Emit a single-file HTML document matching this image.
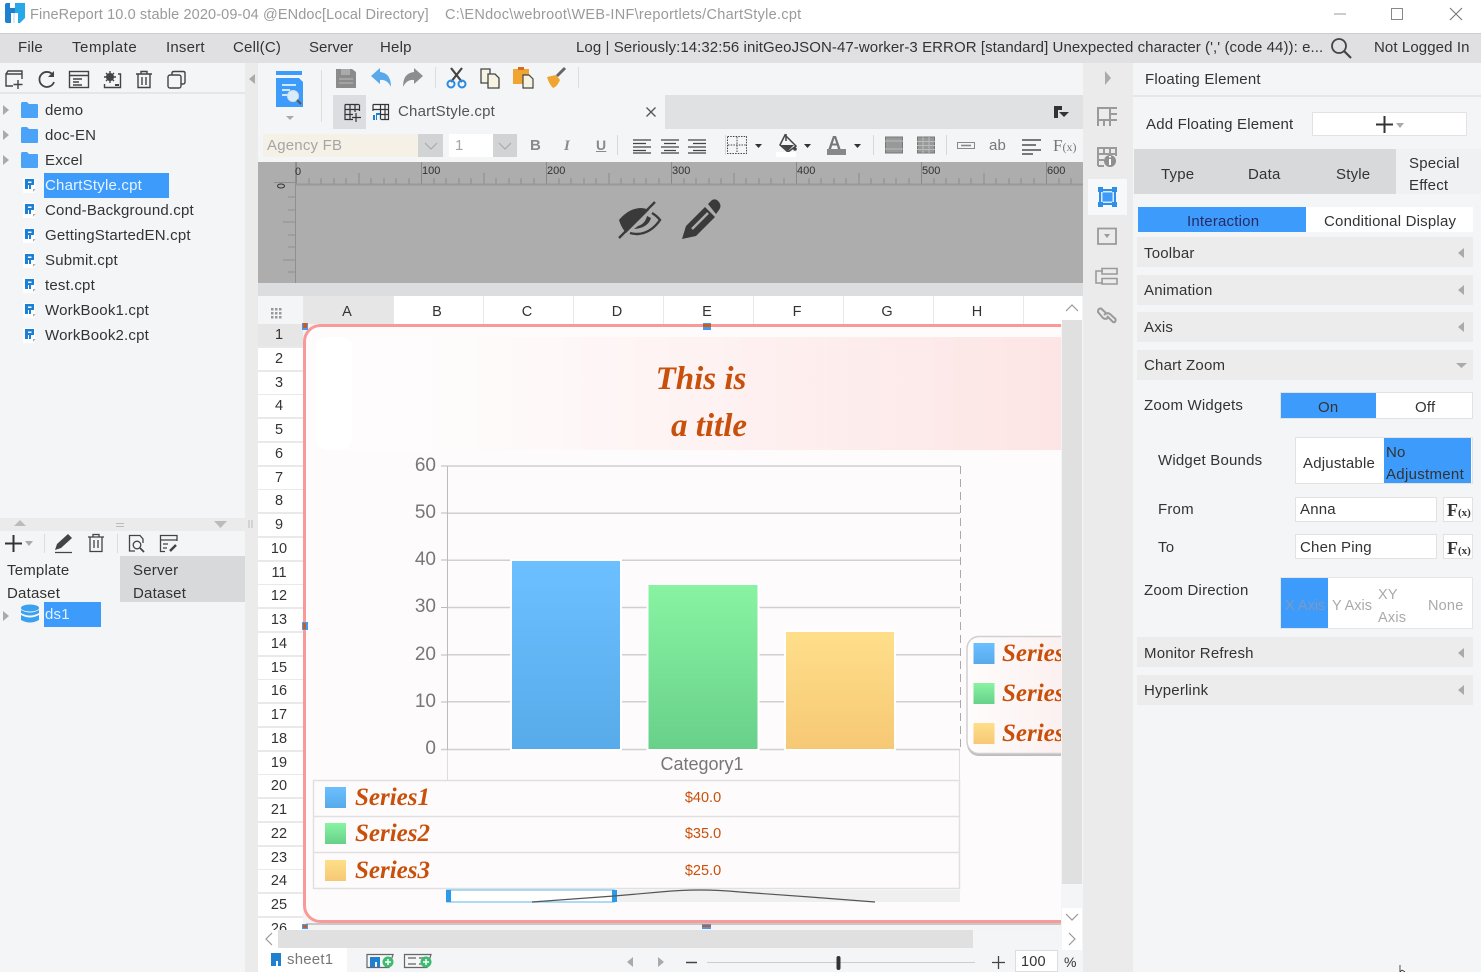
<!DOCTYPE html>
<html><head><meta charset="utf-8"><title>FineReport</title>
<style>
html,body{margin:0;padding:0;width:1481px;height:972px;overflow:hidden;background:#f4f5f7}
body{position:relative;font-family:"Liberation Sans",sans-serif;color:#333}
.b{position:absolute}
.t{position:absolute;white-space:nowrap;font-size:15px;line-height:18px;letter-spacing:.2px;color:#333;margin-top:1px}
.r{position:absolute;left:258px;width:45px;height:22px;box-sizing:border-box;padding-right:3px;background:#fff;text-align:center;font-size:14.5px;line-height:23px;color:#333}
.c{position:absolute;top:296px;width:89px;height:28px;box-sizing:border-box;padding-right:3px;background:#fff;text-align:center;font-size:14.5px;line-height:32px;color:#333}
.s{position:absolute;left:1137px;width:336px;height:30px;background:#ececec}
svg{position:absolute;left:0;top:0}
</style></head><body>

<!-- chrome backgrounds -->
<div class="b" style="left:0;top:0;width:1481px;height:33px;background:#fff"></div>
<div class="b" style="left:0;top:33px;width:1481px;height:30px;background:#e0e0e2;border-top:1px solid #ccc;box-sizing:border-box"></div>
<div class="b" style="left:245px;top:63px;width:13px;height:909px;background:#ebebeb"></div>
<div class="b" style="left:0;top:92px;width:245px;height:2px;background:#e6e6e8"></div>
<div class="b" style="left:0;top:518px;width:245px;height:13px;background:#ebebeb"></div>
<div class="b" style="left:120px;top:556px;width:125px;height:46px;background:#d8d9db"></div>
<div class="b" style="left:44px;top:173px;width:125px;height:25px;background:#3d9bfb"></div>
<div class="b" style="left:44px;top:602px;width:57px;height:25px;background:#3d9bfb"></div>

<!-- centre -->
<div class="b" style="left:333px;top:95px;width:750px;height:34px;background:#e0e1e3"></div>
<div class="b" style="left:366px;top:95px;width:299px;height:34px;background:#f4f5f7"></div>
<div class="b" style="left:333px;top:95px;width:33px;height:34px;background:#dcdde0"></div>
<div class="b" style="left:263px;top:134px;width:155px;height:23px;background:#f5f1e6"></div>
<div class="b" style="left:418px;top:134px;width:25px;height:23px;background:#d2d3d5"></div>
<div class="b" style="left:449px;top:134px;width:44px;height:23px;background:#fff"></div>
<div class="b" style="left:493px;top:134px;width:24px;height:23px;background:#d2d3d5"></div>
<div class="b" style="left:258px;top:162px;width:825px;height:121px;background:#adadad"></div>
<div class="b" style="left:258px;top:283px;width:825px;height:13px;background:#dcddde"></div>
<div class="b" style="left:258px;top:296px;width:45px;height:28px;background:#f4f5f7"></div>

<!-- column heads -->
<div class="b" style="left:303px;top:296px;width:760px;height:28px;background:#e8e8e8"></div>
<div class="c" style="left:304px;background:#e6e6e6">A</div>
<div class="c" style="left:394px">B</div>
<div class="c" style="left:484px">C</div>
<div class="c" style="left:574px">D</div>
<div class="c" style="left:664px">E</div>
<div class="c" style="left:754px">F</div>
<div class="c" style="left:844px">G</div>
<div class="c" style="left:934px">H</div>
<div class="c" style="left:1024px;width:38px"></div>

<!-- row heads -->
<div class="b" style="left:258px;top:324px;width:45px;height:606px;background:#e9e9e9"></div>
<div class="r" style="top:324px;background:#e6e6e6">1</div>
<div class="r" style="top:348px">2</div>
<div class="r" style="top:372px">3</div>
<div class="r" style="top:395px">4</div>
<div class="r" style="top:419px">5</div>
<div class="r" style="top:443px">6</div>
<div class="r" style="top:467px">7</div>
<div class="r" style="top:490px">8</div>
<div class="r" style="top:514px">9</div>
<div class="r" style="top:538px">10</div>
<div class="r" style="top:562px">11</div>
<div class="r" style="top:585px">12</div>
<div class="r" style="top:609px">13</div>
<div class="r" style="top:633px">14</div>
<div class="r" style="top:657px">15</div>
<div class="r" style="top:680px">16</div>
<div class="r" style="top:704px">17</div>
<div class="r" style="top:728px">18</div>
<div class="r" style="top:752px">19</div>
<div class="r" style="top:775px">20</div>
<div class="r" style="top:799px">21</div>
<div class="r" style="top:823px">22</div>
<div class="r" style="top:847px">23</div>
<div class="r" style="top:870px">24</div>
<div class="r" style="top:894px">25</div>
<div class="r" style="top:918px;height:12px;overflow:hidden">26</div>

<!-- sheet white area & scrollbars -->
<div class="b" style="left:303px;top:324px;width:759px;height:606px;background:#f4f4f5"></div>
<div class="b" style="left:1062px;top:296px;width:21px;height:634px;background:#f4f5f7"></div>
<div class="b" style="left:1062px;top:296px;width:20px;height:24px;background:#fff"></div>
<div class="b" style="left:1062px;top:320px;width:20px;height:564px;background:#e0e0e0"></div>
<div class="b" style="left:1062px;top:908px;width:20px;height:22px;background:#fff"></div>
<div class="b" style="left:258px;top:930px;width:825px;height:18px;background:#f4f5f7"></div>
<div class="b" style="left:278px;top:930px;width:695px;height:18px;background:#e0e0e0"></div>
<div class="b" style="left:258px;top:930px;width:20px;height:18px;background:#fff"></div>
<div class="b" style="left:1062px;top:930px;width:20px;height:20px;background:#fff"></div>
<div class="b" style="left:258px;top:948px;width:89px;height:24px;background:#fff"></div>
<div class="b" style="left:1015px;top:950px;width:43px;height:22px;background:#fff;border:1px solid #ddd;box-sizing:border-box"></div>

<!-- right side -->
<div class="b" style="left:1083px;top:63px;width:50px;height:909px;background:#ebebeb"></div>
<div class="b" style="left:1088px;top:179px;width:39px;height:36px;background:#f7f8f9"></div>
<div class="b" style="left:1133px;top:95px;width:348px;height:2px;background:#e6e6e8"></div>
<div class="b" style="left:1312px;top:112px;width:155px;height:24px;background:#fff;border:1px solid #e2e2e2;box-sizing:border-box"></div>
<div class="b" style="left:1134px;top:149px;width:262px;height:45px;background:#d8d9db"></div>
<div class="b" style="left:1396px;top:149px;width:85px;height:45px;background:#f0f1f3"></div>
<div class="b" style="left:1138px;top:207px;width:168px;height:25px;background:#3d9bfb"></div>
<div class="b" style="left:1306px;top:207px;width:167px;height:25px;background:#fff"></div>
<div class="s" style="top:237px"></div>
<div class="s" style="top:275px"></div>
<div class="s" style="top:312px"></div>
<div class="s" style="top:350px"></div>
<div class="s" style="top:637px"></div>
<div class="s" style="top:675px"></div>
<div class="b" style="left:1280px;top:392px;width:193px;height:27px;background:#fff;border:1px solid #e2e2e2;box-sizing:border-box"></div>
<div class="b" style="left:1281px;top:393px;width:95px;height:25px;background:#3d9bfb"></div>
<div class="b" style="left:1295px;top:437px;width:178px;height:47px;background:#fff;border:1px solid #e2e2e2;box-sizing:border-box"></div>
<div class="b" style="left:1384px;top:438px;width:87px;height:45px;background:#3d9bfb"></div>
<div class="b" style="left:1295px;top:497px;width:142px;height:25px;background:#fff;border:1px solid #e2e2e2;box-sizing:border-box"></div>
<div class="b" style="left:1443px;top:497px;width:30px;height:25px;background:#fff;border:1px solid #e2e2e2;box-sizing:border-box"></div>
<div class="b" style="left:1295px;top:534px;width:142px;height:25px;background:#fff;border:1px solid #e2e2e2;box-sizing:border-box"></div>
<div class="b" style="left:1443px;top:534px;width:30px;height:25px;background:#fff;border:1px solid #e2e2e2;box-sizing:border-box"></div>
<div class="b" style="left:1280px;top:577px;width:193px;height:52px;background:#fff;border:1px solid #e6e6e6;box-sizing:border-box"></div>
<div class="b" style="left:1281px;top:578px;width:47px;height:50px;background:#3d9bfb"></div>

<svg width="1481" height="972" viewBox="0 0 1481 972">
<defs>
<linearGradient id="gb" x1="0" y1="0" x2="0" y2="1"><stop offset="0" stop-color="#6cc0ff"/><stop offset="1" stop-color="#58abe9"/></linearGradient>
<linearGradient id="gg" x1="0" y1="0" x2="0" y2="1"><stop offset="0" stop-color="#88f4a2"/><stop offset="1" stop-color="#68d08a"/></linearGradient>
<linearGradient id="gy" x1="0" y1="0" x2="0" y2="1"><stop offset="0" stop-color="#ffdf8a"/><stop offset="1" stop-color="#f6c875"/></linearGradient>
<linearGradient id="ti" x1="0" y1="0" x2="1" y2="0"><stop offset="0" stop-color="#fefdfd"/><stop offset=".2" stop-color="#fefbfb"/><stop offset="1" stop-color="#fde4e4"/></linearGradient>
<linearGradient id="lg" x1="0" y1="0" x2="1" y2="0"><stop offset="0" stop-color="#fefcfc"/><stop offset="1" stop-color="#fbe9e9"/></linearGradient>
<clipPath id="cc"><rect x="303" y="320" width="758" height="610"/></clipPath>
<clipPath id="rul"><rect x="296" y="162" width="787" height="24"/></clipPath>
<g id="fold"><path d="M0 3 V15 Q0 16 1 16 H16 Q17 16 17 15 V3 Q17 2 16 2 H8 L6 0 H1 Q0 0 0 3Z" fill="#4aa3f6"/></g>
<g id="cpt"><rect x="0" y="0" width="12" height="15" fill="#fff"/><path d="M2 1 H11 V7 H8 V11 H6 V7 H5 V11 H2Z" fill="#1a7fd6"/><rect x="5" y="3.500" width="3.500" height="1.500" fill="#fff"/><path d="M10 11 l2.500 0 l-2.500 3z" fill="#aaa"/></g>
<path id="tl" d="M0 0 L6 5 L0 10Z"/>
<path id="lt" d="M6 0 L0 5 L6 10Z" fill="#aaa"/>
</defs>

<!-- logo -->
<path d="M5 5 Q5 3 7 3 H15 V23 H7 Q5 23 5 21Z" fill="#1f80d0"/><path d="M15 3 H25 V18 L20 23 H15Z" fill="#28a8e8"/><path d="M10 3 H15 V8 H10Z" fill="#fff"/><path d="M11 13 H18 V23 H11Z" fill="#fff"/><rect x="13" y="13" width="2" height="10" fill="#d8ecfa"/>

<!-- window controls -->
<path d="M1334 14 H1346" stroke="#999" stroke-width="1"/>
<rect x="1391.500" y="8.500" width="11" height="11" fill="none" stroke="#888"/>
<path d="M1450 8 L1462 20 M1462 8 L1450 20" stroke="#777" stroke-width="1.100"/>
<!-- search -->
<circle cx="1339" cy="46" r="7" fill="none" stroke="#444" stroke-width="1.800"/><path d="M1344 51 L1351 58" stroke="#444" stroke-width="2.200"/>

<!-- left toolbar icons -->
<g fill="none" stroke="#444" stroke-width="1.400">
<path d="M13 87 H6 V75 H22 V80 M6 75 L8 72 H22 V75 M18 81 V90 M13.500 85.500 H22.500" transform="translate(0,-1)"/>
<path d="M53 75 A7.500 7.500 0 1 0 54 82" stroke-width="1.800"/><path d="M54 71 V77 H48" fill="#444" stroke="none"/>
<rect x="69.500" y="71.500" width="19" height="16"/><path d="M69.500 75.500 H88.500 M73 79 H82 M73 82 H79 M73 85 H82"/>
<circle cx="110" cy="77" r="4" fill="#444" stroke="none"/><circle cx="110" cy="77" r="1.500" fill="#fff" stroke="none"/><path d="M110 71 V83 M104 77 H116 M106 73 L114 81 M114 73 L106 81"/><path d="M118 74 H120.500 V87.500 H104.500 V84"/><path d="M115 85 l4 0" stroke-width="2"/>
<path d="M136 74 H152 M141 74 V71.500 H147 V74 M138 74 V87.500 H150 V74 M142 77 V85 M146 77 V85"/>
<rect x="168" y="75" width="13" height="13" rx="2"/><path d="M172 75 V73 Q172 71.500 174 71.500 H183 Q185 71.500 185 73 V82 Q185 84 183 84 H181"/>
</g>
<use href="#tl" x="3" y="105" fill="#aaa"/><use href="#tl" x="3" y="130" fill="#aaa"/><use href="#tl" x="3" y="155" fill="#aaa"/>
<use href="#fold" x="21" y="102"/><use href="#fold" x="21" y="127"/><use href="#fold" x="21" y="152"/>
<use href="#cpt" x="23" y="178"/><use href="#cpt" x="23" y="203"/><use href="#cpt" x="23" y="228"/><use href="#cpt" x="23" y="253"/><use href="#cpt" x="23" y="278"/><use href="#cpt" x="23" y="303"/><use href="#cpt" x="23" y="328"/>
<use href="#lt" x="249" y="74" />

<!-- lower-left splitter -->
<path d="M14 526 L20 520 L26 526Z M214 521 H227 L220.500 528Z" fill="#bbb"/><path d="M116 523.500 H124 M116 526.500 H124 M249 520 V528 M252 520 V528" stroke="#bbb"/>
<path d="M5 543.500 H22 M13.500 535 V552" stroke="#333" stroke-width="2"/><path d="M25 541 H33 L29 546Z" fill="#aaa"/>
<path d="M44.500 534 V553 M117.500 534 V553" stroke="#ddd"/>
<path d="M55 550 L57 544 L68 534 L72 538 L61 548Z" fill="#444"/><path d="M55 552.500 H72" stroke="#444" stroke-width="1.300"/>
<g fill="none" stroke="#444" stroke-width="1.300"><path d="M88 537 H104 M93 537 V534.500 H99 V537 M90 537 V551.500 H102 V537 M94 540 V548 M98 540 V548"/>
<path d="M135 551 H129.500 V535.500 H140 L143 539 V543"/><circle cx="137" cy="545" r="3.800"/><path d="M140 548 L144 552" stroke-width="1.800"/>
<path d="M165 551.500 H160.500 V535.500 H177 V541 M160.500 540 H177 M163 544 H168 M163 548 H167"/><path d="M170 551 L176 545" stroke-width="2.500"/></g>
<use href="#tl" x="3" y="611" fill="#aaa"/>
<g><ellipse cx="30" cy="608" rx="9" ry="3.500" fill="#3aa0f0"/><path d="M21 610 Q30 615 39 610 V613 Q30 618 21 613Z M21 615 Q30 620 39 615 V620 Q30 625 21 620Z" fill="#3aa0f0"/></g>

<!-- top toolbar icons -->
<path d="M276 71 H302 V75 H276Z" fill="#3d9bfb"/><path d="M276 78 H299 L303 82 V107 H276Z" fill="#3d9bfb"/>
<path d="M282 85 H296 M282 90 H290 M282 95 H288" stroke="#fff" stroke-width="1.500"/><circle cx="293" cy="96" r="5.500" fill="#d8edfb" stroke="#ddd"/><path d="M297 100 L301 104" stroke="#555" stroke-width="2"/>
<path d="M286 116 H294 L290 120Z" fill="#aaa"/>
<path d="M321.500 70 V122" stroke="#ddd"/>
<path d="M336 69 H352 L356 72 V88 H336Z" fill="#8b8b8b"/><rect x="341" y="69" width="9" height="6" fill="#aaa"/><path d="M339 79 H353 M339 83 H353" stroke="#bbb"/>
<path d="M371 76 L380 68 V72 Q391 73 391 87 Q387 79 380 80 V84Z" fill="#59a8ec"/>
<path d="M423 76 L414 68 V72 Q403 73 403 87 Q407 79 414 80 V84Z" fill="#8d8d8d"/>
<path d="M435.500 67 V88 M578.500 67 V88" stroke="#ddd"/>
<g fill="none"><path d="M451 68 L462 82 M462 68 L451 82" stroke="#444" stroke-width="2.200"/><circle cx="451" cy="84" r="3.500" stroke="#2a8be0" stroke-width="2"/><circle cx="462" cy="84" r="3.500" stroke="#2a8be0" stroke-width="2"/></g>
<path d="M481 69 H490 V83 H481Z" fill="#f7f3e3" stroke="#444" stroke-width="1.300"/><path d="M488 74 H495 L499 78 V88 H488Z" fill="#f7f3e3" stroke="#444" stroke-width="1.300"/>
<path d="M513 69 H529 V75 H523 V84 H513Z" fill="#f0a530"/><rect x="518" y="67" width="6" height="3" fill="#d86a20"/><path d="M523 75 H529 L533 79 V88 H523Z" fill="#f7f3e3" stroke="#444" stroke-width="1.200"/>
<path d="M547 77 L556 75 L560 80 Q557 87 553 88 Q549 84 547 77Z" fill="#f0a530"/><path d="M557 76 L565 68" stroke="#666" stroke-width="3"/>

<!-- tab icons -->
<g fill="none" stroke="#333" stroke-width="1.200"><path d="M345 104.500 H359 M345 109.500 H359 M345 114.500 H353 M345 104.500 V119.500 H353 M350 104.500 V119.500 M355 104.500 V112 M359.500 104.500 V111"/><path d="M356 113 V122 M352 117.500 H361"/>
<path d="M373 104.500 H388.500 V119.500 H381 M373 104.500 V111 M373 109.500 H388.500 M380.500 104.500 V119.500 M385 104.500 V119.500 M381 114.500 H388.500"/></g>
<path d="M373 113 H380 V115 H377 V120 H375 V115 H373Z M373 113 V120 H376 V113Z" fill="#1a7fd6"/>
<path d="M646.500 107.500 L655.500 116.500 M655.500 107.500 L646.500 116.500" stroke="#555" stroke-width="1.300"/>
<path d="M1054 106 H1062 V110 H1058 V118 H1054Z" fill="#333"/><path d="M1059 112 H1069 L1064 117Z" fill="#333"/>
<path d="M425 143 L431 149 L437 143 M499 143 L505 149 L511 143" fill="none" stroke="#aaa" stroke-width="1.200"/>

<!-- format bar -->
<path d="M617.500 135 V155 M725.500 135 V155 M873.500 135 V155 M946.500 135 V155" stroke="#d8d8d8"/>
<g stroke="#444" stroke-width="1.300"><path d="M633 140 H651 M633 143.500 H646 M633 147 H651 M633 150.500 H646 M633 153 H651"/><path d="M661 140 H679 M664 143.500 H676 M661 147 H679 M664 150.500 H676 M661 153 H679"/><path d="M688 140 H706 M693 143.500 H706 M688 147 H706 M693 150.500 H706 M688 153 H706"/></g>
<rect x="727.500" y="136.500" width="19" height="17" fill="none" stroke="#444" stroke-dasharray="1.500 1.200"/><path d="M737 137 V153 M728 145 H746" stroke="#444" stroke-dasharray="1.500 1.200"/>
<path d="M755 144 H762 L758.500 148Z M804 144 H811 L807.500 148Z M854 144 H861 L857.500 148Z" fill="#333"/>
<path d="M785 135 L796 146 L788 152 L780 145Z" fill="none" stroke="#444" stroke-width="1.500"/><path d="M786 134 V141" stroke="#444" stroke-width="1.500"/><path d="M781 145 H794 L788 151Z" fill="#444"/><circle cx="795" cy="149" r="1.800" fill="#444"/>
<rect x="776" y="152" width="20" height="5" fill="#fff"/>
<rect x="827" y="149" width="19" height="6" fill="#888"/>
<rect x="885.500" y="137" width="17" height="16" fill="#999" stroke="#777"/><path d="M885 141 H903 M885 149 H903" stroke="#bbb"/>
<rect x="917.500" y="137" width="17" height="16" fill="#999" stroke="#777"/><path d="M917 141.500 H935 M917 145.500 H935 M917 149.500 H935 M923 137 V153 M929 137 V153" stroke="#bbb"/>
<rect x="957.500" y="142.500" width="17" height="6" fill="none" stroke="#888"/><path d="M961 145.500 H971" stroke="#888" stroke-width="1.600"/>
<path d="M1022 140 H1041 M1022 145 H1036 M1022 150 H1041 M1022 154 H1033" stroke="#666" stroke-width="1.700"/>

<!-- ruler -->
<g clip-path="url(#rul)" stroke="#8a8a8a" fill="none">
<path d="M296.500 162 V184 M421.500 162 V184 M546.500 162 V184 M671.500 162 V184 M796.500 162 V184 M921.500 162 V184 M1046.500 162 V184 M359 173 V184 M484 173 V184 M609 173 V184 M734 173 V184 M859 173 V184 M984 173 V184"/>
<path d="M309 178 V184 M321 178 V184 M334 178 V184 M346 178 V184 M371 178 V184 M384 178 V184 M396 178 V184 M409 178 V184 M434 178 V184 M446 178 V184 M459 178 V184 M471 178 V184 M496 178 V184 M509 178 V184 M521 178 V184 M534 178 V184 M559 178 V184 M571 178 V184 M584 178 V184 M596 178 V184 M621 178 V184 M634 178 V184 M646 178 V184 M659 178 V184 M684 178 V184 M696 178 V184 M709 178 V184 M721 178 V184 M746 178 V184 M759 178 V184 M771 178 V184 M784 178 V184 M809 178 V184 M821 178 V184 M834 178 V184 M846 178 V184 M871 178 V184 M884 178 V184 M896 178 V184 M909 178 V184 M934 178 V184 M946 178 V184 M959 178 V184 M971 178 V184 M996 178 V184 M1009 178 V184 M1021 178 V184 M1034 178 V184 M1059 178 V184 M1071 178 V184"/>
</g>
<path d="M274 182.500 H296 M295.500 162 V283" stroke="#8f8f8f"/><path d="M296 184.500 H1083" stroke="#999" stroke-width="2"/>
<path d="M288 197 H295 M288 210 H295 M283 222 H295 M288 235 H295 M288 247 H295 M283 260 H295 M288 272 H295" stroke="#8f8f8f"/>
<ellipse cx="281" cy="186" rx="2" ry="3.500" transform="rotate(90 281 186)" fill="none" stroke="#333"/>

<!-- eye and pencil -->
<path d="M619 220 Q628 209 640 208 Q645 208 649 210 L626 233 Q621 227 619 220Z" fill="#3a3a3a"/>
<path d="M652 213 Q657 216 660 220 Q651 233 638 234 Q633 234 630 233" fill="none" stroke="#3a3a3a" stroke-width="2.400"/>
<path d="M651 218 Q648 228 634 229 L638 226 Q645 224 647 216Z" fill="#3a3a3a"/>
<path d="M619 238 L655 202" stroke="#3a3a3a" stroke-width="2.300"/>
<path d="M682 239 L686 226 L705 207 L715 217 L696 236Z" fill="#3a3a3a"/><path d="M692 229 L708 213" stroke="#adadad" stroke-width="2.500"/><path d="M708 204 L712 200 Q716 198 719 202 Q722 206 719 210 L716 214Z" fill="#3a3a3a"/>

<!-- grid dots -->
<g fill="#999"><rect x="271" y="308" width="2.500" height="2.500"/><rect x="275" y="308" width="2.500" height="2.500"/><rect x="279" y="308" width="2.500" height="2.500"/><rect x="271" y="312" width="2.500" height="2.500"/><rect x="275" y="312" width="2.500" height="2.500"/><rect x="279" y="312" width="2.500" height="2.500"/><rect x="271" y="316" width="2.500" height="2.500"/><rect x="275" y="316" width="2.500" height="2.500"/><rect x="279" y="316" width="2.500" height="2.500"/></g>
<path d="M1066 311 L1072 305 L1078 311 M1066 914 L1072 920 L1078 914 M272 933 L266 939 L272 945 M1069 933 L1075 939 L1069 945" fill="none" stroke="#999" stroke-width="1.200"/>

<!-- CHART -->
<g clip-path="url(#cc)">
<path d="M306 924 H1062" stroke="#c8c8c8" stroke-width="2"/>
<rect x="304.500" y="325.500" width="790" height="596" rx="16" fill="#fefbfc" stroke="#f99a9a" stroke-width="3"/>
<rect x="316" y="337" width="760" height="113" fill="url(#ti)"/>
<rect x="316" y="337" width="36" height="113" rx="12" fill="#ffffff"/>
<g stroke="#d0d0d0" stroke-width="1.500"><path d="M441 466 H960 M447 513.200 H960 M447 560.300 H960 M447 607.500 H960 M447 654.700 H960 M447 701.800 H960 M441 749.500 H960"/></g>
<path d="M447.500 466 V750 M441 513 H447 M441 560 H447 M441 607.500 H447 M441 655 H447 M441 702 H447" stroke="#bbb"/>
<path d="M960.500 466 V750" stroke="#aaa" stroke-dasharray="8 5"/>
<path d="M447.500 750 V780 M959.500 750 V780" stroke="#ddd"/>
<rect x="511" y="560" width="110" height="190" fill="url(#gb)" stroke="#fff" stroke-width="2"/>
<rect x="647.500" y="584" width="111" height="166" fill="url(#gg)" stroke="#fff" stroke-width="2"/>
<rect x="785" y="631" width="110" height="119" fill="url(#gy)" stroke="#fff" stroke-width="2"/>
<g font-family="'Liberation Sans',sans-serif" font-size="19" fill="#777" text-anchor="end"><text x="436" y="471">60</text><text x="436" y="518">50</text><text x="436" y="565">40</text><text x="436" y="612">30</text><text x="436" y="660">20</text><text x="436" y="707">10</text><text x="436" y="754">0</text></g>
<text x="702" y="770" font-family="'Liberation Sans',sans-serif" font-size="18" fill="#777" text-anchor="middle">Category1</text>
<g font-family="'Liberation Serif',serif" font-weight="bold" font-style="italic" fill="#c8500a">
<text x="701" y="389" font-size="33" text-anchor="middle">This is</text>
<text x="709" y="436" font-size="33" text-anchor="middle">a title</text>
</g>
<!-- legend -->
<rect x="967" y="638" width="150" height="118" rx="12" fill="#bdbdbd"/>
<rect x="967" y="636.500" width="150" height="117" rx="12" fill="url(#lg)" stroke="#d0d0d0" stroke-width="1.500"/>
<rect x="973.500" y="643" width="21" height="21" fill="url(#gb)"/><rect x="973.500" y="683" width="21" height="21" fill="url(#gg)"/><rect x="973.500" y="723" width="21" height="21" fill="url(#gy)"/>
<g font-family="'Liberation Serif',serif" font-weight="bold" font-style="italic" fill="#c8500a" font-size="25"><text x="1002" y="661">Series</text><text x="1002" y="701">Series</text><text x="1002" y="741">Series</text></g>
<!-- table -->
<rect x="313.500" y="780.500" width="646" height="108" fill="#fefbfc" stroke="#e0e0e0" stroke-width="1.500"/><path d="M314 816.500 H959 M314 852.500 H959" stroke="#e0e0e0" stroke-width="1.500"/>
<rect x="325" y="787" width="21" height="21" fill="url(#gb)"/><rect x="325" y="823" width="21" height="21" fill="url(#gg)"/><rect x="325" y="860" width="21" height="21" fill="url(#gy)"/>
<g font-family="'Liberation Serif',serif" font-weight="bold" font-style="italic" fill="#c8500a" font-size="25"><text x="355" y="805">Series1</text><text x="355" y="841">Series2</text><text x="355" y="878">Series3</text></g>
<g font-family="'Liberation Sans',sans-serif" font-size="14.500" fill="#c8500a" text-anchor="middle"><text x="703" y="802">$40.0</text><text x="703" y="838">$35.0</text><text x="703" y="875">$25.0</text></g>
<!-- range -->
<rect x="614" y="890" width="346" height="12" fill="#f0eff0"/>
<rect x="447" y="890" width="167" height="12" fill="#fff" stroke="#8fd0ef" stroke-width="1.500"/>
<rect x="446" y="890" width="5" height="12" fill="#2d9ae8"/><rect x="612" y="890" width="5" height="12" fill="#2d9ae8"/>
<path d="M532 902 L614 896 L660 892 Q700 888 740 892 L810 897 L875 902" fill="none" stroke="#555" stroke-width="1.200"/>
</g>
<!-- handles -->
<g><rect x="302" y="323" width="6" height="7" fill="#3d9bfb"/><rect x="303" y="323" width="4" height="5" fill="#d35a12"/>
<rect x="703" y="323" width="8" height="7" fill="#3d9bfb"/><rect x="703" y="324" width="8" height="3" fill="#d35a12"/>
<rect x="302" y="622" width="6" height="8" fill="#3d9bfb"/><rect x="303" y="623" width="3" height="6" fill="#d35a12"/>
<rect x="302" y="924" width="6" height="5" fill="#3d9bfb"/><rect x="303" y="925" width="4" height="3" fill="#d35a12"/>
<rect x="702" y="924" width="9" height="5" fill="#3d9bfb"/><rect x="702" y="925" width="9" height="2" fill="#d35a12"/></g>

<!-- bottom bar -->
<path d="M271 953 H281 V966 H278 V961 H276 V966 H271Z" fill="#1f7fd0"/>
<g fill="none" stroke="#666" stroke-width="1.200"><path d="M367 954.500 H393 L389 967.500 H367Z M404.500 954.500 H431 L427 967.500 H404.500Z"/><path d="M408 958 H416 M419 958 H425 M408 964 H416 M419 964 H421" stroke-width="2" stroke="#999"/></g>
<path d="M370 957 H380 V967 H377 V962 H375 V967 H370Z" fill="#1f7fd0"/>
<circle cx="388" cy="962" r="5.500" fill="#3dbb70"/><circle cx="426" cy="962" r="5.500" fill="#3dbb70"/><path d="M385 962 H391 M388 959 V965 M423 962 H429 M426 959 V965" stroke="#fff" stroke-width="1.500"/>
<path d="M633 957 L627 962 L633 967Z M658 957 L664 962 L658 967Z" fill="#aaa"/>
<path d="M686 962.500 H697" stroke="#444" stroke-width="1.500"/><path d="M707 962.500 H975" stroke="#ccc"/><rect x="836.500" y="956" width="4" height="14" rx="2" fill="#333"/>
<path d="M992 962.500 H1005 M998.500 956 V969" stroke="#444" stroke-width="1.300"/>
<path d="M1400 965 V972 L1402 970 L1405 972" fill="#fff" stroke="#222" stroke-width=".8"/>

<!-- right strip icons -->
<path d="M1105 71 L1111 78 L1105 85Z" fill="#aaa"/>
<g fill="none" stroke="#9a9a9a" stroke-width="2">
<path d="M1117 108 H1098 V126 M1098 120 H1117 M1104 120 V126 M1110 120 V126 M1110 108 V120 M1110 114 H1117"/>
<path d="M1098 166 V148 H1116 V156 M1098 154 H1116 M1104 148 V154 M1110 148 V154 M1098 160 H1104 M1098 166 H1104"/>
<path d="M1098 228.500 H1116 V244 H1098Z" stroke-width="1.800"/>
<path d="M1103 271 H1096 V283 H1103" stroke-width="1.600"/><path d="M1102 268.500 H1117 V274 H1102Z M1102 278.500 H1117 V284 H1102Z" stroke-width="1.600"/>
<path d="M1106 313 L1101 308.500 Q1098 308 1098 312 L1103 318 Q1106 320 1109 317 M1107 316 L1113 322 Q1116 323 1115.500 319 L1110 314 Q1107 312 1104 315" stroke-width="2"/>
</g>
<circle cx="1110" cy="161" r="6" fill="#8f8f8f"/><path d="M1110 159 V165 M1110 156 V157.500" stroke="#fff" stroke-width="2"/>
<path d="M1104 234 H1110 L1107 238Z" fill="#9a9a9a"/>
<rect x="1100" y="190" width="15" height="14" fill="#d6e9fd" stroke="#2f8fe8" stroke-width="2"/><rect x="1102.500" y="192.500" width="10" height="9" fill="#3d9bfb"/>
<path d="M1098 187 H1103 V192 H1098Z M1112 187 H1117 V192 H1112Z M1098 202 H1103 V207 H1098Z M1112 202 H1117 V207 H1112Z" fill="#2f8fe8"/>
<!-- right add button -->
<path d="M1376 124.500 H1393 M1384.500 116 V133" stroke="#333" stroke-width="2"/><path d="M1396 123 H1404 L1400 128Z" fill="#aaa"/>
<!-- section arrows -->
<use href="#lt" x="1458" y="248"/><use href="#lt" x="1458" y="285"/><use href="#lt" x="1458" y="322"/><use href="#lt" x="1458" y="648"/><use href="#lt" x="1458" y="685"/>
<path d="M1456 363 H1467 L1461.500 368Z" fill="#aaa"/>
</svg>

<!-- TEXT -->
<div class="t" style="left:30px;top:5px;color:#9a9a9a;font-size:14.5px;letter-spacing:.12px">FineReport 10.0 stable 2020-09-04 @ENdoc[Local Directory]</div>
<div class="t" style="left:445px;top:5px;color:#9a9a9a;font-size:14.5px;letter-spacing:.28px">C:\ENdoc\webroot\WEB-INF\reportlets/ChartStyle.cpt</div>
<div class="t" style="left:18px;top:38px">File</div>
<div class="t" style="left:72px;top:38px;letter-spacing:.55px">Template</div>
<div class="t" style="left:166px;top:38px">Insert</div>
<div class="t" style="left:233px;top:38px">Cell(C)</div>
<div class="t" style="left:309px;top:38px;letter-spacing:0">Server</div>
<div class="t" style="left:380px;top:38px">Help</div>
<div class="t" style="left:576px;top:38px;letter-spacing:.075px">Log | Seriously:14:32:56 initGeoJSON-47-worker-3 ERROR [standard] Unexpected character (',' (code 44)): e...</div>
<div class="t" style="left:1374px;top:38px;letter-spacing:.1px">Not Logged In</div>

<div class="t" style="left:45px;top:101px">demo</div>
<div class="t" style="left:45px;top:126px">doc-EN</div>
<div class="t" style="left:45px;top:151px">Excel</div>
<div class="t" style="left:45px;top:176px;color:#e8f4ff">ChartStyle.cpt</div>
<div class="t" style="left:45px;top:201px">Cond-Background.cpt</div>
<div class="t" style="left:45px;top:226px">GettingStartedEN.cpt</div>
<div class="t" style="left:45px;top:251px">Submit.cpt</div>
<div class="t" style="left:45px;top:276px">test.cpt</div>
<div class="t" style="left:45px;top:301px">WorkBook1.cpt</div>
<div class="t" style="left:45px;top:326px">WorkBook2.cpt</div>

<div class="t" style="left:7px;top:561px">Template</div>
<div class="t" style="left:7px;top:584px">Dataset</div>
<div class="t" style="left:133px;top:561px">Server</div>
<div class="t" style="left:133px;top:584px">Dataset</div>
<div class="t" style="left:45px;top:605px;color:#e0f0ff">ds1</div>

<div class="t" style="left:398px;top:102px;color:#555">ChartStyle.cpt</div>
<div class="t" style="left:267px;top:136px;color:#a5a5a5">Agency FB</div>
<div class="t" style="left:455px;top:136px;color:#a5a5a5">1</div>
<div class="t" style="left:530px;top:136px;color:#8a8a8a;font-weight:bold">B</div>
<div class="t" style="left:564px;top:136px;color:#8a8a8a;font-style:italic;font-family:'Liberation Serif',serif;font-weight:bold">I</div>
<div class="t" style="left:596px;top:135px;color:#8a8a8a;text-decoration:underline;font-weight:bold;font-size:14px">U</div>
<div class="t" style="left:828px;top:133px;color:#777;font-weight:bold;font-size:18px">A</div>
<div class="t" style="left:989px;top:136px;color:#777">ab</div>
<div class="t" style="left:1053px;top:136px;color:#777;font-family:'Liberation Serif',serif;font-size:17px;letter-spacing:0">F<span style="font-size:12px">(x)</span></div>
<div class="t" style="left:295px;top:162px;font-size:11px;letter-spacing:0;color:#333">0</div>
<div class="t" style="left:422px;top:161px;font-size:11px;letter-spacing:0;color:#333">100</div>
<div class="t" style="left:547px;top:161px;font-size:11px;letter-spacing:0;color:#333">200</div>
<div class="t" style="left:672px;top:161px;font-size:11px;letter-spacing:0;color:#333">300</div>
<div class="t" style="left:797px;top:161px;font-size:11px;letter-spacing:0;color:#333">400</div>
<div class="t" style="left:922px;top:161px;font-size:11px;letter-spacing:0;color:#333">500</div>
<div class="t" style="left:1047px;top:161px;font-size:11px;letter-spacing:0;color:#333">600</div>

<div class="t" style="left:287px;top:950px;color:#777">sheet1</div>
<div class="t" style="left:1021px;top:952px;font-size:14.5px">100</div>
<div class="t" style="left:1064px;top:952px;font-size:14px;letter-spacing:0">%</div>

<div class="t" style="left:1145px;top:70px">Floating Element</div>
<div class="t" style="left:1146px;top:115px">Add Floating Element</div>
<div class="t" style="left:1161px;top:165px">Type</div>
<div class="t" style="left:1248px;top:165px">Data</div>
<div class="t" style="left:1336px;top:165px">Style</div>
<div class="t" style="left:1409px;top:154px">Special</div>
<div class="t" style="left:1409px;top:176px">Effect</div>
<div class="t" style="left:1187px;top:212px;color:#2a2a66">Interaction</div>
<div class="t" style="left:1324px;top:212px">Conditional Display</div>
<div class="t" style="left:1144px;top:244px">Toolbar</div>
<div class="t" style="left:1144px;top:281px">Animation</div>
<div class="t" style="left:1144px;top:318px">Axis</div>
<div class="t" style="left:1144px;top:356px">Chart Zoom</div>
<div class="t" style="left:1144px;top:396px">Zoom Widgets</div>
<div class="t" style="left:1318px;top:398px">On</div>
<div class="t" style="left:1415px;top:398px">Off</div>
<div class="t" style="left:1158px;top:451px">Widget Bounds</div>
<div class="t" style="left:1303px;top:454px">Adjustable</div>
<div class="t" style="left:1386px;top:443px">No</div>
<div class="t" style="left:1386px;top:465px;letter-spacing:.3px">Adjustment</div>
<div class="t" style="left:1158px;top:500px">From</div>
<div class="t" style="left:1300px;top:500px">Anna</div>
<div class="t" style="left:1447px;top:500px;font-family:'Liberation Serif',serif;font-size:18px;font-weight:bold;letter-spacing:0">F<span style="font-size:11px">(x)</span></div>
<div class="t" style="left:1158px;top:538px">To</div>
<div class="t" style="left:1300px;top:538px">Chen Ping</div>
<div class="t" style="left:1447px;top:538px;font-family:'Liberation Serif',serif;font-size:18px;font-weight:bold;letter-spacing:0">F<span style="font-size:11px">(x)</span></div>
<div class="t" style="left:1144px;top:581px">Zoom Direction</div>
<div class="t" style="left:1285px;top:596px;color:#7c9ac4;font-size:14.5px;letter-spacing:0">X Axis</div>
<div class="t" style="left:1332px;top:596px;color:#aaa;font-size:14.5px;letter-spacing:0">Y Axis</div>
<div class="t" style="left:1378px;top:585px;color:#aaa;font-size:14.5px">XY</div>
<div class="t" style="left:1378px;top:608px;color:#aaa;font-size:14.5px">Axis</div>
<div class="t" style="left:1428px;top:596px;color:#aaa;font-size:14.5px">None</div>
<div class="t" style="left:1144px;top:644px">Monitor Refresh</div>
<div class="t" style="left:1144px;top:681px">Hyperlink</div>
</body></html>
